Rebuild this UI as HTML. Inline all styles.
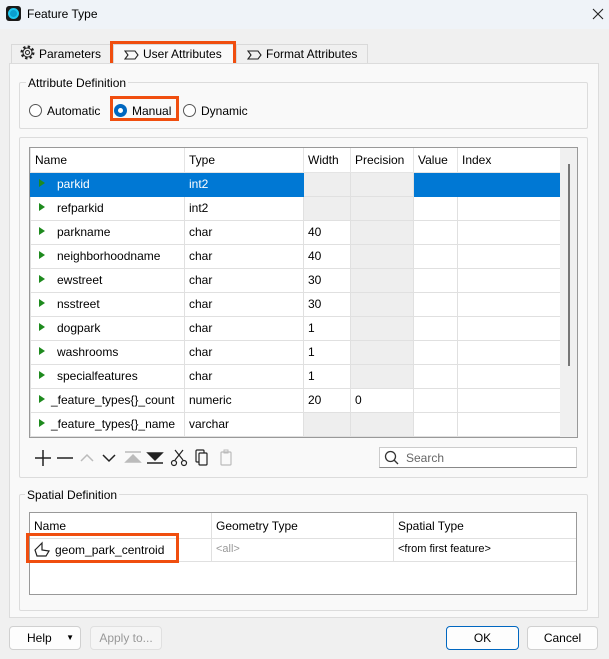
<!DOCTYPE html>
<html><head><style>
*{box-sizing:border-box;margin:0;padding:0}
body{width:609px;height:659px;background:#f0f0f0;font-family:"Liberation Sans",sans-serif;font-size:12px;color:#000;position:relative;overflow:hidden}
.a{position:absolute}
.title{left:0;top:0;width:609px;height:29px;background:#eff3f8}
.tab{position:absolute;top:44px;height:20px;border:1px solid #d9d9d9;border-bottom:none;background:#f0f0f0;font-size:12px;line-height:18px}
.tab svg{vertical-align:-2px;margin-right:4px}
.pane{left:9px;top:63px;width:590px;height:555px;background:#f9f9f9;border:1px solid #dcdcdc}
.grp{position:absolute;border:1px solid #dcdcdc;border-radius:2px}
.lbl{position:absolute;background:#f9f9f9;padding:0 2px}
.orange{position:absolute;border:3px solid #f04e0f}
table{border-collapse:collapse;table-layout:fixed}
td,th{border:1px solid #e0e0e0;height:24px;padding:0 4px;font-weight:normal;text-align:left;white-space:nowrap;overflow:hidden;font-size:12px}
th{border-top:none;border-color:#e4e4e4}
.g{background:#eeeeee}
.sel td{background:#0078d4;color:#fff;border-color:#0078d4}
.sel td.g{background:#eeeeee;border-color:#e0e0e0}
.tri{display:inline-block;width:0;height:0;border-left:6px solid #1e8a1e;border-top:4px solid transparent;border-bottom:4px solid transparent;margin:0 12px 0 4px;position:relative;top:-2px;vertical-align:middle}
.radio{display:inline-block;width:13px;height:13px;border:1px solid #555;border-radius:50%;vertical-align:-2px;margin-right:5px;background:#fff}
.btn{position:absolute;top:626px;height:24px;border:1px solid #d0d0d0;border-radius:4px;background:#fdfdfd;text-align:center;line-height:22px;font-size:12px}
</style></head><body>
<div class="a title"></div>
<div class="a" style="left:6px;top:6px;width:15px;height:15px;background:#1a1a1a;border-radius:3px"></div>
<div class="a" style="left:8px;top:8px;width:11px;height:11px;border:2px solid #1ec8f0;border-radius:50%;background:#0a9fd0"></div>
<div class="a" style="left:27px;top:7px;font-size:12px">Feature Type</div>
<svg class="a" style="left:592px;top:8px" width="12" height="12" stroke="#222" stroke-width="1.1"><path d="M1 1l10 10M11 1L1 11"/></svg>

<div class="tab" style="left:11px;width:101px;padding-left:8px"><svg width="15" height="15" fill="none" stroke="#222"><circle cx="7.5" cy="7.5" r="5.5" stroke-width="3" stroke-dasharray="2.2 2.12"/><circle cx="7.5" cy="7.5" r="4.5" fill="#f0f0f0" stroke-width="1"/><circle cx="7.5" cy="7.5" r="2" stroke-width="1"/></svg>Parameters</div>
<div class="tab" style="left:113px;width:122px;background:#f9f9f9;height:21px;padding-left:10px"><svg width="15" height="10" fill="none" stroke="#222" stroke-width="1.1"><path d="M1 1h10l3 4-3 4H1l3-4z"/></svg>User Attributes</div>
<div class="tab" style="left:236px;width:132px;padding-left:10px"><svg width="15" height="10" fill="none" stroke="#222" stroke-width="1.1"><path d="M1 1h10l3 4-3 4H1l3-4z"/></svg>Format Attributes</div>
<div class="orange" style="left:110px;top:41px;width:126px;height:25px"></div>

<div class="a pane"></div>
<div class="grp" style="left:19px;top:82px;width:569px;height:47px"></div>
<div class="lbl" style="left:26px;top:76px">Attribute Definition</div>
<div class="a" style="left:29px;top:104px"><span class="radio"></span>Automatic</div>
<div class="a" style="left:114px;top:104px"><span class="radio" style="border:4px solid #0067c0;background:#fff"></span>Manual</div>
<div class="a" style="left:183px;top:104px"><span class="radio"></span>Dynamic</div>
<div class="orange" style="left:110px;top:96px;width:69px;height:25px"></div>

<div class="grp" style="left:19px;top:137px;width:569px;height:341px"></div>
<div class="a" style="left:29px;top:147px;width:549px;height:291px;background:#fff;border:1px solid #999;overflow:hidden">
<table style="width:530px">
<colgroup><col style="width:154px"><col style="width:119px"><col style="width:47px"><col style="width:63px"><col style="width:44px"><col style="width:103px"></colgroup>
<tr><th>Name</th><th>Type</th><th>Width</th><th>Precision</th><th>Value</th><th>Index</th></tr>
<tr class="sel"><td><span class="tri"></span>parkid</td><td>int2</td><td class="g"></td><td class="g"></td><td></td><td></td></tr>
<tr><td><span class="tri"></span>refparkid</td><td>int2</td><td class="g"></td><td class="g"></td><td></td><td></td></tr>
<tr><td><span class="tri"></span>parkname</td><td>char</td><td>40</td><td class="g"></td><td></td><td></td></tr>
<tr><td><span class="tri"></span>neighborhoodname</td><td>char</td><td>40</td><td class="g"></td><td></td><td></td></tr>
<tr><td><span class="tri"></span>ewstreet</td><td>char</td><td>30</td><td class="g"></td><td></td><td></td></tr>
<tr><td><span class="tri"></span>nsstreet</td><td>char</td><td>30</td><td class="g"></td><td></td><td></td></tr>
<tr><td><span class="tri"></span>dogpark</td><td>char</td><td>1</td><td class="g"></td><td></td><td></td></tr>
<tr><td><span class="tri"></span>washrooms</td><td>char</td><td>1</td><td class="g"></td><td></td><td></td></tr>
<tr><td><span class="tri"></span>specialfeatures</td><td>char</td><td>1</td><td class="g"></td><td></td><td></td></tr>
<tr><td><span class="tri" style="margin-right:6px"></span>_feature_types{}_count</td><td>numeric</td><td>20</td><td>0</td><td></td><td></td></tr>
<tr><td><span class="tri" style="margin-right:6px"></span>_feature_types{}_name</td><td>varchar</td><td class="g"></td><td class="g"></td><td></td><td></td></tr>
<tr><td></td><td></td><td class="g"></td><td class="g"></td><td></td><td></td></tr>
</table>
<div class="a" style="left:530px;top:0;width:18px;height:291px;background:#f0f0f0"></div>
<div class="a" style="left:538px;top:16px;width:2px;height:202px;background:#777"></div>
</div>

<svg class="a" style="left:33px;top:448px" width="210" height="20" fill="none" stroke-width="1.5">
<path d="M2 10h16M10 2v16" stroke="#222"/>
<path d="M24 10h16" stroke="#222"/>
<path d="M48 13l6-6 6 6" stroke="#bbb"/>
<path d="M70 7l6 6 6-6" stroke="#222"/>
<path d="M92 4h16M93 14l7-7 7 7z" stroke="#bbb" fill="#bbb"/>
<path d="M114 15h16M115 5l7 7 7-7z" stroke="#222" fill="#222"/>
<path d="M142 2l8 10M150 2l-8 10" stroke="#222" stroke-width="1.2"/><circle cx="141" cy="15" r="2.5" stroke="#222" stroke-width="1.2"/><circle cx="151" cy="15" r="2.5" stroke="#222" stroke-width="1.2"/>
<rect x="163" y="2" width="8" height="12" rx="1" stroke="#222" stroke-width="1.2"/><rect x="166" y="5" width="8" height="12" rx="1" stroke="#222" fill="#f9f9f9" stroke-width="1.2"/>
<rect x="188" y="4" width="10" height="13" rx="1" stroke="#bbb" stroke-width="1.2"/><rect x="191" y="2" width="4" height="3" stroke="#bbb" stroke-width="1"/>
</svg>
<div class="a" style="left:379px;top:447px;width:198px;height:21px;background:#fff;border:1px solid #ccc;border-bottom:1px solid #888"></div>
<svg class="a" style="left:384px;top:450px" width="16" height="16" fill="none" stroke="#333" stroke-width="1.3"><circle cx="6.5" cy="6.5" r="5"/><path d="M10 10l4 4"/></svg>
<div class="a" style="left:406px;top:451px;color:#666">Search</div>

<div class="grp" style="left:19px;top:494px;width:569px;height:117px"></div>
<div class="lbl" style="left:25px;top:488px">Spatial Definition</div>
<div class="a" style="left:29px;top:512px;width:548px;height:83px;background:#fff;border:1px solid #999">
<div class="a" style="left:0;top:0;width:546px;height:26px;border-bottom:1px solid #e0e0e0"></div>
<div class="a" style="left:181px;top:0;width:1px;height:48px;background:#e0e0e0"></div>
<div class="a" style="left:363px;top:0;width:1px;height:48px;background:#e0e0e0"></div>
<div class="a" style="left:0;top:48px;width:546px;height:1px;background:#e0e0e0"></div>
<div class="a" style="left:4px;top:6px">Name</div>
<div class="a" style="left:186px;top:6px">Geometry Type</div>
<div class="a" style="left:368px;top:6px">Spatial Type</div>
<svg class="a" style="left:3px;top:28px" width="18" height="18" fill="none" stroke="#222" stroke-width="1.2"><path d="M9 2l-7 7 2 6h9l3-5-7-1z"/></svg>
<div class="a" style="left:25px;top:30px">geom_park_centroid</div>
<div class="a" style="left:186px;top:30px;color:#999;font-size:11px">&lt;all&gt;</div>
<div class="a" style="left:368px;top:30px;font-size:11px">&lt;from first feature&gt;</div>
</div>
<div class="orange" style="left:26px;top:533px;width:153px;height:30px"></div>

<div class="btn" style="left:9px;width:72px;text-align:left;padding-left:17px">Help<span style="position:absolute;right:6px;font-size:8px">▼</span></div>
<div class="btn" style="left:90px;width:72px;color:#999;background:#f5f5f5;border-color:#e0e0e0">Apply to...</div>
<div class="btn" style="left:446px;width:73px;border-color:#0067c0">OK</div>
<div class="btn" style="left:527px;width:71px">Cancel</div>
</body></html>
